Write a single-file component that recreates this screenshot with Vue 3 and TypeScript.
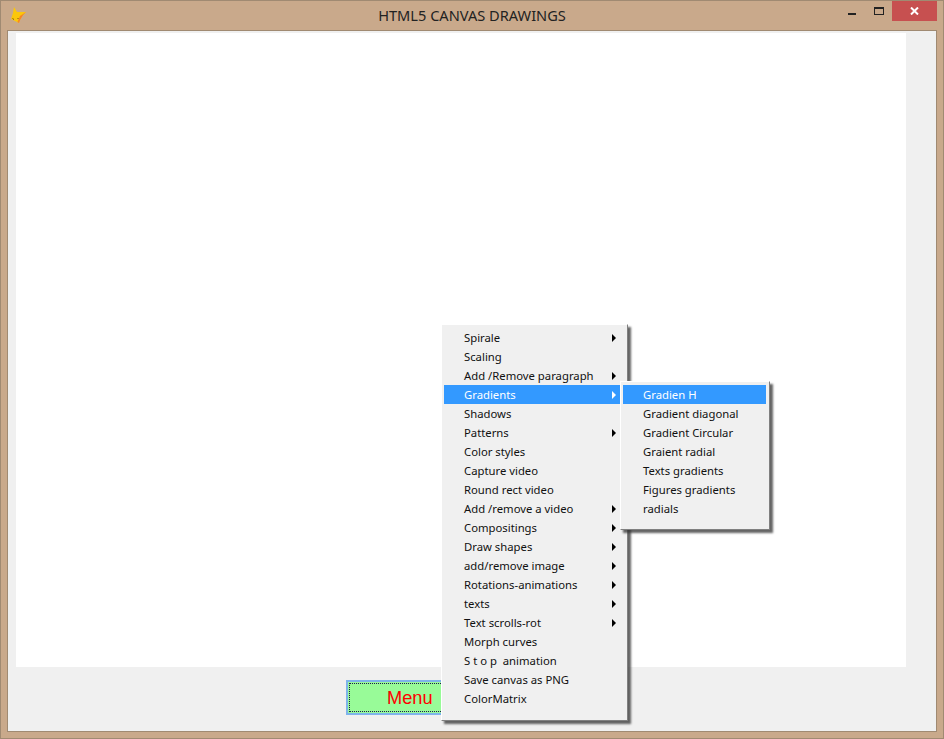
<script setup lang="ts">
interface Item { label: string; sub?: boolean; active?: boolean }
const mainItems: Item[] = [
  { label: 'Spirale', sub: true },
  { label: 'Scaling' },
  { label: 'Add /Remove paragraph', sub: true },
  { label: 'Gradients', sub: true, active: true },
  { label: 'Shadows' },
  { label: 'Patterns', sub: true },
  { label: 'Color styles' },
  { label: 'Capture video' },
  { label: 'Round rect video' },
  { label: 'Add /remove a video', sub: true },
  { label: 'Compositings', sub: true },
  { label: 'Draw shapes', sub: true },
  { label: 'add/remove image', sub: true },
  { label: 'Rotations-animations', sub: true },
  { label: 'texts', sub: true },
  { label: 'Text scrolls-rot', sub: true },
  { label: 'Morph curves' },
  { label: 'S t o p  animation' },
  { label: 'Save canvas as PNG' },
  { label: 'ColorMatrix' },
]
const subItems: Item[] = [
  { label: 'Gradien H', active: true },
  { label: 'Gradient diagonal' },
  { label: 'Gradient Circular' },
  { label: 'Graient radial' },
  { label: 'Texts gradients' },
  { label: 'Figures gradients' },
  { label: 'radials' },
]
</script>

<template>
  <div class="window">
    <header class="titlebar">
      <svg class="app-icon" width="15" height="16" viewBox="0 0 15 16">
        <path d="M3 0 L6 5 L15 5 L12 8 L9 13 L8 16 L4 14 L0 12 L2 6 Z" fill="#fbc70c" />
        <path d="M15 5 L12 8 L9 13 L8 16 L6.5 15 L9 9 Z" fill="#f5822a" />
        <path d="M1.5 11.5 L3 12.5 M6.5 11 L7.5 12" stroke="#7a5a10" stroke-width="1" />
      </svg>
      <div class="title">HTML5 CANVAS DRAWINGS</div>
      <div class="controls">
        <span class="min"></span>
        <span class="max"></span>
        <span class="close">
          <svg width="9" height="8" viewBox="0 0 9 8">
            <path d="M1 0.5 L8 7.5 M8 0.5 L1 7.5" stroke="#fff" stroke-width="2" fill="none" />
          </svg>
        </span>
      </div>
    </header>
    <main class="client">
      <div class="canvas"></div>
      <div class="footer">
        <button class="menu-btn"><span class="focus"><span class="menu-label">Menu</span></span></button>
      </div>
      <nav class="popup main-menu">
        <div v-for="it in mainItems" :key="it.label" class="item" :class="{ active: it.active }">
          <span class="label">{{ it.label }}</span>
          <span v-if="it.sub" class="arrow"></span>
        </div>
      </nav>
      <nav class="popup sub-menu">
        <div v-for="it in subItems" :key="it.label" class="item" :class="{ active: it.active }">
          <span class="label">{{ it.label }}</span>
        </div>
      </nav>
    </main>
  </div>
</template>

<style>
html, body { margin: 0; padding: 0; background: #c9a98c; }
</style>

<style scoped>
.window {
  width: 944px;
  height: 739px;
  box-sizing: border-box;
  background: #c9a98b;
  border: 1px solid #a08a72;
  display: flex;
  flex-direction: column;
  padding: 0 6px 6px 6px;
  font-family: "Noto Sans", Tahoma, sans-serif;
  overflow: hidden;
}
.titlebar {
  height: 29px;
  flex: none;
  display: flex;
  align-items: flex-start;
  position: relative;
}
.app-icon { margin: 6px 0 0 4px; flex: none; }
.title {
  position: absolute;
  left: 0;
  right: 0;
  top: 4px;
  text-align: center;
  font: 14.6px/20px "Noto Sans", "Open Sans", sans-serif;
  color: #222;
}
.controls {
  margin-left: auto;
  display: flex;
  align-items: flex-start;
  position: relative;
}
.min {
  width: 8px;
  height: 2px;
  background: #222;
  margin: 12px 18px 0 0;
}
.max {
  width: 10px;
  height: 8px;
  box-sizing: border-box;
  border: 1px solid #222;
  border-top-width: 2px;
  margin: 6px 8px 0 0;
}
.close {
  width: 45px;
  height: 20px;
  background: #c75050;
  display: flex;
  align-items: center;
  justify-content: center;
}
.client {
  flex: 1;
  background: #f0f0f0;
  border: 1px solid #a08a72;
  position: relative;
  display: flex;
  flex-direction: column;
  padding: 2px 30px 0 8px;
}
.canvas {
  height: 634px;
  background: #fff;
  flex: none;
}
.footer {
  flex: 1;
  display: flex;
  align-items: flex-start;
  padding: 13px 0 0 330px;
}
.menu-btn {
  width: 110px;
  height: 35px;
  box-sizing: border-box;
  padding: 1px;
  border: 2px solid #7eb4ea;
  background: #98fb98;
  display: block;
}
.focus {
  display: block;
  height: 100%;
  box-sizing: border-box;
  border: 1px dotted #1a1a50;
  text-align: left;
  padding-left: 37px;
}
.menu-label {
  font: 18.2px/29px "Liberation Sans", Arial, sans-serif;
  color: #ff0000;
}
.popup {
  position: absolute;
  box-sizing: border-box;
  background: #f0f0f0;
  border: 1px solid #fff;
  border-right-color: #808080;
  border-bottom-color: #808080;
  box-shadow: 3px 3px 2px rgba(50, 50, 50, 0.75);
  padding: 3px 2px;
}
.main-menu { left: 433px; top: 293px; width: 187px; height: 397px; }
.sub-menu { left: 612px; top: 350px; width: 150px; height: 149px; padding-right: 3px; }
.item {
  height: 19px;
  display: flex;
  align-items: center;
  padding-left: 20px;
  font-size: 11.3px;
  color: #111;
  position: relative;
  white-space: pre;
}
.item.active { background: #3399ff; color: #fff; }
.label { line-height: 19px; }
.arrow {
  position: absolute;
  right: 9px;
  top: 6px;
  width: 0;
  height: 0;
  border-left: 4px solid #000;
  border-top: 4px solid transparent;
  border-bottom: 4px solid transparent;
}
.item.active .arrow { border-left-color: #fff; }
</style>
